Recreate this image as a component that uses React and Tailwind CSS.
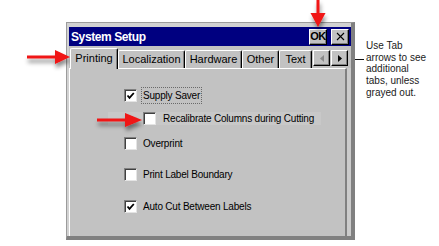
import React from 'react';

// Sunken checkbox, Windows CE style
const CheckBox = ({ checked }) => (
  <div className="flex h-[13px] w-[13px] shrink-0 items-center justify-center border border-[#808080] border-r-[#e4e4e4] border-b-[#e4e4e4] bg-white shadow-[inset_1px_1px_0_#404040]">
    {checked && (
      <svg width="9" height="9" viewBox="0 0 9 9">
        <polyline points="1.5,4.5 3.5,6.8 7.8,2" fill="none" stroke="#000" strokeWidth="1.8" />
      </svg>
    )}
  </div>
);

const Option = ({ label, checked, focused, className = '', gap = 'ml-[6px]' }) => (
  <div className={`flex h-[13px] items-center ${className}`}>
    <CheckBox checked={checked} />
    {focused ? (
      <span className="ml-[4px] border border-dotted border-[#6a6a6a] px-[1px] py-[1px] text-[10px] leading-[13px] tracking-[-0.2px] text-black">
        {label}
      </span>
    ) : (
      <span className={`${gap} text-[10px] leading-[13px] tracking-[-0.2px] text-black`}>{label}</span>
    )}
  </div>
);

const Tab = ({ label, width, selected }) =>
  selected ? (
    <div
      className={`relative z-10 -mb-px flex h-[21px] ${width} items-center justify-center rounded-t-[2px] border-t border-l border-white border-r border-r-[#000] bg-[#c2c2c2] pb-[1px] text-[11px] text-black shadow-[inset_-1px_0_0_#808080]`}
    >
      {label}
    </div>
  ) : (
    <div
      className={`flex h-[18px] ${width} items-center justify-center rounded-t-[2px] border-t border-l border-white border-r border-r-[#000] text-[11px] text-black shadow-[inset_-1px_0_0_#808080]`}
    >
      {label}
    </div>
  );

const ScrollBtn = ({ dir, disabled }) => (
  <div className="flex h-[16px] w-[17px] items-center justify-center border border-white border-r-[#000] border-b-[#000] bg-[#c2c2c2] shadow-[inset_-1px_-1px_0_#808080]">
    <svg width="4" height="7" viewBox="0 0 4 7">
      {dir === 'left' ? (
        <polygon points="4,0 0,3.5 4,7" fill={disabled ? '#8a8a8a' : '#000'} />
      ) : (
        <polygon points="0,0 4,3.5 0,7" fill={disabled ? '#8a8a8a' : '#000'} />
      )}
    </svg>
  </div>
);

const TitleBtn = ({ children }) => (
  <div className="flex h-[16px] w-[18px] items-center justify-center border border-white border-r-[#000] border-b-[#000] bg-[#c2c2c2] shadow-[inset_-1px_-1px_0_#808080]">
    {children}
  </div>
);

export default function App() {
  return (
    <div className="relative h-[246px] w-[439px] overflow-hidden bg-white font-['Liberation_Sans',Arial,sans-serif]">
      <div className="flex items-start pl-[66px] pt-[22px]">
        {/* Ventana System Setup */}
        <div className="flex h-[218px] w-[289px] flex-col border-t border-l border-[#9c9c9c] border-r-[4px] border-b-[4px] border-r-[#808080] border-b-[#808080]">
          <div className="flex flex-1 flex-col bg-[#d2d2d2] pt-[4px] pl-[2px]">
            {/* Title bar */}
            <div className="flex h-[19px] items-center justify-between bg-[#000080] pl-[2px] pr-[2px]">
              <span className="text-[12px] font-bold tracking-[-0.4px] text-white">System Setup</span>
              <div className="flex items-center gap-[4px]">
                <TitleBtn>
                  <span className="text-[11px] font-bold leading-none tracking-[-0.6px] text-black">OK</span>
                </TitleBtn>
                <TitleBtn>
                  <svg width="9" height="9" viewBox="0 0 9 9">
                    <path d="M1 1 L8 8 M8 1 L1 8" stroke="#000" strokeWidth="1.1" />
                  </svg>
                </TitleBtn>
              </div>
            </div>

            {/* Body */}
            <div className="flex flex-1 flex-col bg-[#c2c2c2]">
              {/* Tabs */}
              <div className="flex h-[22px] items-end pl-[1px]">
                <Tab label="Printing" width="w-[48px]" selected />
                <Tab label="Localization" width="w-[67px]" />
                <Tab label="Hardware" width="w-[57px]" />
                <Tab label="Other" width="w-[37px]" />
                <Tab label="Text" width="w-[33px]" />
                <div className="mb-[2px] ml-[1px] flex gap-[1px]">
                  <ScrollBtn dir="left" disabled />
                  <ScrollBtn dir="right" />
                </div>
              </div>

              {/* Panel */}
              <div className="flex flex-1">
                <div className="flex flex-1 flex-col border-t border-l border-white border-r-2 border-r-[#808080] pl-[54px] pt-[20px]">
                  <Option label="Supply Saver" checked focused />
                  <div className="mt-[10px] -ml-[16px] mr-[24px] flex bg-[#c8c8c8] pl-[35px]">
                    <Option label="Recalibrate Columns during Cutting" gap="ml-[7px]" />
                  </div>
                  <Option label="Overprint" className="mt-[12px]" />
                  <Option label="Print Label Boundary" className="mt-[18px]" />
                  <Option label="Auto Cut Between Labels" checked className="mt-[19px]" />
                </div>
                <div className="w-[4px] bg-[#cbcbcb]" />
              </div>
            </div>
          </div>
        </div>

        {/* Nota lateral */}
        <div className="mt-[18px] flex items-start">
          <div className="mt-[19px] h-px w-[9px] bg-[#111]" />
          <div className="ml-[2px] text-[10px] leading-[11.7px] text-[#1b1b1b]">
            Use Tab
            <br />
            arrows to see
            <br />
            additional
            <br />
            tabs, unless
            <br />
            grayed out.
          </div>
        </div>
      </div>

      {/* Flechas rojas */}
      <svg className="pointer-events-none absolute inset-0" width="439" height="246" viewBox="0 0 439 246">
        <defs>
          <filter id="sh" x="-20%" y="-50%" width="160%" height="220%">
            <feDropShadow dx="1" dy="4" stdDeviation="2" floodColor="#000" floodOpacity="0.45" />
          </filter>
        </defs>
        <g fill="#f01414" filter="url(#sh)">
          <polygon points="27,55.5 55,55.5 55,50 70,57 55,64 55,58.5 27,58.5" />
          <polygon points="97,118.5 125,118.5 125,113 142,120 125,127 125,121.5 97,121.5" />
          <polygon points="316.5,0 319.5,0 319.5,13 325.5,13 318,27 310.5,13 316.5,13" />
        </g>
      </svg>
    </div>
  );
}
